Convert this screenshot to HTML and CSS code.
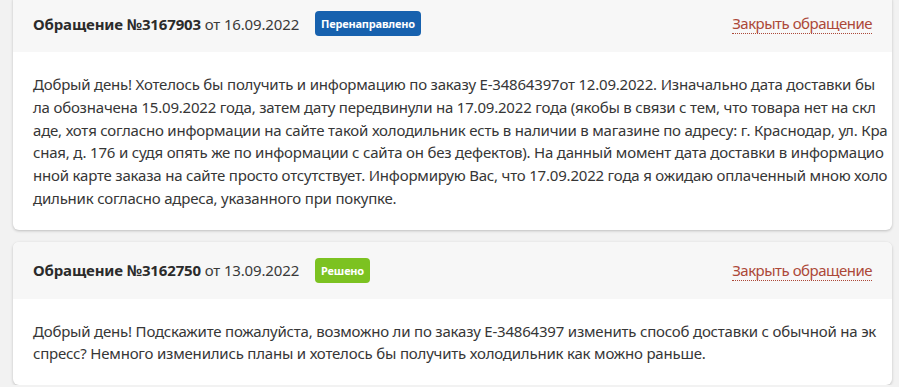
FILE: index.html
```html
<!DOCTYPE html>
<html lang="ru">
<head>
<meta charset="utf-8">
<title>Обращения</title>
<link rel="stylesheet" href="styles.css">
</head>
<body>
<div class="list">
  <article class="ticket">
    <header class="ticket-head">
      <div class="ticket-title"><b class="ticket-num">Обращение №3167903</b> от 16.09.2022</div>
      <span class="badge badge-blue">Перенаправлено</span>
      <a class="close-link" href="#">Закрыть обращение</a>
    </header>
    <div class="ticket-body">
      <p class="ticket-text">Добрый день! Хотелось бы получить и информацию по заказу Е-34864397от 12.09.2022. Изначально дата доставки бы<br>ла обозначена 15.09.2022 года, затем дату передвинули на 17.09.2022 года (якобы в связи с тем, что товара нет на скл<br>аде, хотя согласно информации на сайте такой холодильник есть в наличии в магазине по адресу: г. Краснодар, ул. Кра<br>сная, д. 176 и судя опять же по информации с сайта он без дефектов). На данный момент дата доставки в информацио<br>нной карте заказа на сайте просто отсутствует. Информирую Вас, что 17.09.2022 года я ожидаю оплаченный мною холо<br>дильник согласно адреса, указанного при покупке.</p>
    </div>
  </article>
  <article class="ticket">
    <header class="ticket-head">
      <div class="ticket-title"><b class="ticket-num">Обращение №3162750</b> от 13.09.2022</div>
      <span class="badge badge-green">Решено</span>
      <a class="close-link" href="#">Закрыть обращение</a>
    </header>
    <div class="ticket-body">
      <p class="ticket-text">Добрый день! Подскажите пожалуйста, возможно ли по заказу Е-34864397 изменить способ доставки с обычной на эк<br>спресс? Немного изменились планы и хотелось бы получить холодильник как можно раньше.</p>
    </div>
  </article>
</div>
</body>
</html>
```
FILE: styles.css
```css
* { box-sizing: border-box; }
body {
  margin: 0;
  background: #f2f2f2;
  font-family: "Noto Sans", "Open Sans", sans-serif;
  color: #333;
}
.list {
  display: flex;
  flex-direction: column;
  gap: 12px;
  padding: 0 7px 0 13px;
  margin-top: -5px;
}
.ticket {
  background: #fff;
  border-radius: 6px;
  box-shadow: 0 1px 3px rgba(0, 0, 0, 0.22);
  overflow: hidden;
}
.ticket-head {
  display: flex;
  align-items: center;
  background: #f7f7f7;
  padding: 16px 20px;
}
.ticket-title {
  font-size: 15px;
  line-height: 20px;
  color: #3a3a3a;
  letter-spacing: -0.15px;
}
.ticket-num {
  color: #2b2b2b;
  font-weight: 700;
}
.badge {
  margin-left: 16px;
  height: 25px;
  line-height: 25px;
  padding: 0 6px;
  border-radius: 4px;
  color: #fff;
  font-weight: 700;
  font-size: 11px;
  letter-spacing: -0.2px;
}
.badge-blue { background: #1761ae; }
.badge-green { background: #7cc221; }
.close-link {
  margin-left: auto;
  color: #ac4838;
  text-decoration: none;
  border-bottom: 1px dotted #ac4838;
  font-size: 15px;
  line-height: 20px;
  letter-spacing: -0.5px;
}
.ticket-body {
  padding: 21px 20px 20px;
}
.ticket-text {
  margin: 0;
  font-size: 15px;
  line-height: 22.75px;
  color: #363636;
  letter-spacing: -0.2px;
  white-space: nowrap;
}
```
